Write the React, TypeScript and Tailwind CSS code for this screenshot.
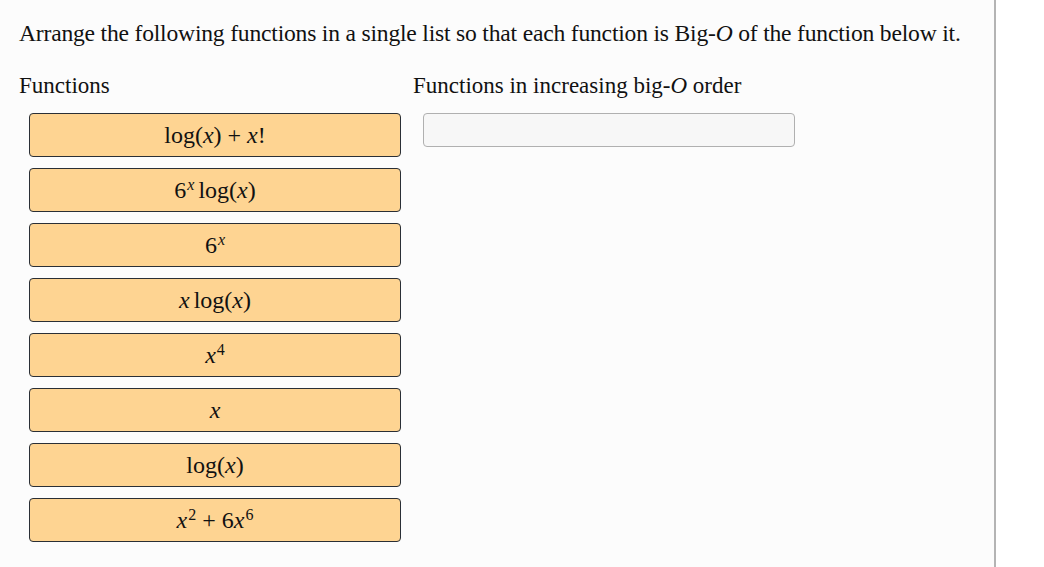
import React from "react";

// small helpers for the formula labels
const V = ({ children }: { children: React.ReactNode }) => (
  <span className="italic">{children}</span>
);

const Sup = ({ children }: { children: React.ReactNode }) => (
  <span className="inline-block align-top text-[16px] leading-none mt-[-1px] ml-[1px]">{children}</span>
);

const Op = ({ children }: { children: React.ReactNode }) => (
  <span className="mx-[6px]">{children}</span>
);

const functions: React.ReactNode[] = [
  <>
    log(<V>x</V>)<Op>+</Op><V>x</V>!
  </>,
  <>
    6<Sup><V>x</V></Sup>
    <span className="ml-[4px]">log(<V>x</V>)</span>
  </>,
  <>
    6<Sup><V>x</V></Sup>
  </>,
  <>
    <V>x</V>
    <span className="ml-[4px]">log(<V>x</V>)</span>
  </>,
  <>
    <V>x</V>
    <Sup>4</Sup>
  </>,
  <>
    <V>x</V>
  </>,
  <>
    log(<V>x</V>)
  </>,
  <>
    <V>x</V>
    <Sup>2</Sup>
    <Op>+</Op>6<V>x</V>
    <Sup>6</Sup>
  </>,
];

export default function App() {
  return (
    <div className="flex min-h-[567px] w-full bg-white">
      <div
        className="w-[996px] bg-[#fcfcfc] border-r-2 border-[#b4b4b4] pl-[19px] pt-[16px] text-[#111]"
        style={{ fontFamily: '"Liberation Serif", serif' }}
      >
        <p className="text-[23.6px] leading-[34px] tracking-[-0.2px]">
          Arrange the following functions in a single list so that each function is Big-<i>O</i> of the function below it.
        </p>

        <div className="flex mt-[19px]">
          {/* Source list */}
          <div className="w-[394px]">
            <h3 className="text-[23px] leading-[34px]">Functions</h3>
            <ul className="mt-[10px] flex flex-col gap-[11px]">
              {functions.map((f, i) => (
                <li
                  key={i}
                  className="ml-[10px] w-[372px] h-[44px] flex items-center justify-center rounded-[4px] border border-[#2a2f36] bg-[#fed492] text-[24px] text-[#111]"
                >
                  <span className="leading-none">{f}</span>
                </li>
              ))}
            </ul>
          </div>

          {/* Target list */}
          <div className="w-[394px]">
            <h3 className="text-[23px] leading-[34px]">
              Functions in increasing big-<i>O</i> order
            </h3>
            <div className="mt-[10px] ml-[10px] w-[372px] h-[34px] rounded-[4px] border border-[#b0b0b0] bg-[#f7f7f7]" />
          </div>
        </div>
      </div>
    </div>
  );
}
